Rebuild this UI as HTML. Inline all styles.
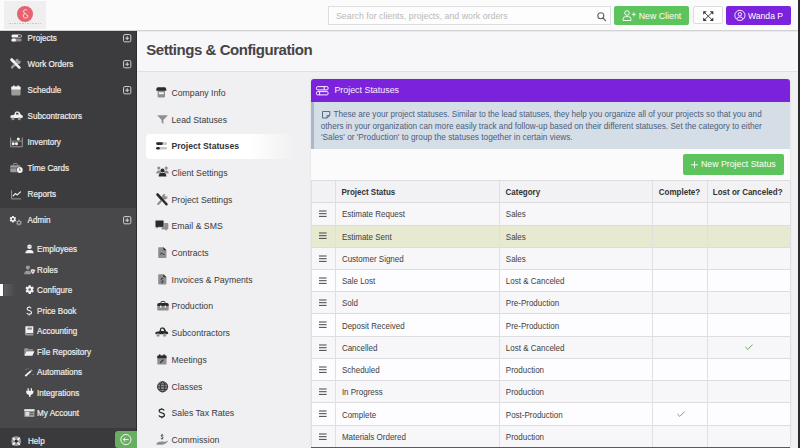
<!DOCTYPE html>
<html><head><meta charset="utf-8"><style>
*{box-sizing:border-box;margin:0;padding:0}
html,body{width:800px;height:448px;overflow:hidden;background:#f0eff1;font-family:"Liberation Sans",sans-serif;position:relative}
.t{position:absolute;white-space:nowrap}
.a{position:absolute}
svg{position:absolute;overflow:visible}
</style></head><body>
<div class="a" style="left:0;top:0;width:800px;height:30px;background:#fbfbfc"></div>
<div class="a" style="left:0;top:30px;width:800px;height:1px;background:#d2d2d4;z-index:3"></div>
<div class="a" style="left:0;top:31px;width:800px;height:1px;background:rgba(0,0,0,.05);z-index:3"></div>
<div class="a" style="left:4px;top:1px;width:42px;height:28px;background:#efefef"></div>
<div class="a" style="left:17.2px;top:5.9px;width:16.2px;height:16px;border-radius:50%;background:#e8616f"></div>
<svg style="left:22px;top:9px" width="7" height="10" viewBox="0 0 7 10"><path d="M5.2 1.6 Q4.6 0.6 3.4 0.7 Q1.4 0.9 1.5 2.7 Q1.6 4.3 3.6 4.4 Q1.2 4.6 1.2 6.8 Q1.3 9.2 3.6 9.1 Q5.8 9 5.8 7.2 Q5.8 5.6 3.8 5.6" fill="none" stroke="#fff" stroke-width="0.75"/></svg>
<div class="a" style="left:9px;top:22.8px;width:32px;height:1.4px;background:repeating-linear-gradient(90deg,#e37a84 0 1.6px,rgba(0,0,0,0) 1.6px 2.6px);opacity:.45"></div>
<div class="a" style="left:327.5px;top:6px;width:283.5px;height:19px;background:#fdfdfd;border:1px solid #dedede"></div>
<div class="t" style="left:336.00px;top:10.95px;font-size:8.8px;line-height:8.8px;color:#b9b9b9;font-weight:normal;transform:scaleY(1.1);transform-origin:0 1.03px;">Search for clients, projects, and work orders</div>

<svg style="left:597px;top:11.6px" width="10" height="10" viewBox="0 0 10 10"><circle cx="3.8" cy="3.8" r="3" fill="none" stroke="#606060" stroke-width="1.1"/><line x1="6" y1="6" x2="8.6" y2="8.6" stroke="#606060" stroke-width="1.3" stroke-linecap="round"/></svg>
<div class="a" style="left:614.3px;top:6.3px;width:74.7px;height:18.4px;background:#5dc35d;border-radius:2px"></div>
<svg style="left:622px;top:10px" width="14" height="11" viewBox="0 0 14 11"><circle cx="5" cy="3" r="2.3" fill="none" stroke="#fff" stroke-width="0.9"/><path d="M1 10.5 V9.3 Q1 6.6 3.6 6.6 H6.4 Q9 6.6 9 9.3 V10.5 Z" fill="none" stroke="#fff" stroke-width="0.9"/><path d="M9.9 4.4 H13.8 M11.85 2.45 V6.35" stroke="#fff" stroke-width="0.95"/></svg>
<div class="t" style="left:638.70px;top:11.05px;font-size:8.8px;line-height:8.8px;color:#fff;font-weight:normal;transform:scaleY(1.1);transform-origin:0 1.03px;">New Client</div>

<div class="a" style="left:692.7px;top:6.3px;width:30px;height:18.2px;background:#fff;border:1px solid #dcdcdc;border-radius:2px"></div>
<svg style="left:702.6px;top:10.5px" width="10.5" height="10.3" viewBox="0 0 10.5 10.3"><g fill="#333"><path d="M0.2 0.2 H3.8 L0.2 3.8 Z"/><path d="M10.3 0.2 H6.7 L10.3 3.8 Z"/><path d="M0.2 10.1 H3.8 L0.2 6.5 Z"/><path d="M10.3 10.1 H6.7 L10.3 6.5 Z"/></g><path d="M1.4 1.4 L9.1 8.9 M9.1 1.4 L1.4 8.9" stroke="#333" stroke-width="0.9"/></svg>
<div class="a" style="left:726.2px;top:6.2px;width:64.8px;height:18.6px;background:#7b22dd;border-radius:2px"></div>
<svg style="left:734px;top:10px" width="12" height="11" viewBox="0 0 12 11"><circle cx="5.9" cy="5.4" r="5.1" fill="none" stroke="#fff" stroke-width="0.9"/><circle cx="5.9" cy="4.2" r="1.7" fill="none" stroke="#fff" stroke-width="0.9"/><path d="M2.8 9 Q3.3 6.9 5.9 6.9 Q8.5 6.9 9 9" fill="none" stroke="#fff" stroke-width="0.9"/></svg>
<div class="t" style="left:748.00px;top:11.12px;font-size:8.6px;line-height:8.6px;color:#fff;font-weight:normal;transform:scaleY(1.1);transform-origin:0 1.01px;">Wanda P</div>

<div class="a" style="left:798.4px;top:0;width:1.6px;height:448px;background:#2a2a2a;z-index:9"></div>
<div class="a" style="left:0;top:30px;width:137px;height:418px;background:#3c3b3d"></div>
<div class="a" style="left:0;top:207.5px;width:137px;height:221px;background:#484749"></div>
<div class="a" style="left:0;top:428px;width:137px;height:20px;background:#3a393b"></div>
<div class="a" style="left:136px;top:30px;width:1px;height:418px;background:#2e2d2f"></div>
<div class="t" style="left:27.60px;top:34.14px;font-size:8.1px;line-height:8.1px;color:#ececec;font-weight:normal;transform:scaleY(1.15);transform-origin:0 0.95px;-webkit-text-stroke:0.2px #ececec">Projects</div>

<svg style="left:122.6px;top:33.90px" width="8.4" height="8.4" viewBox="0 0 8.4 8.4"><rect x="0.55" y="0.55" width="7.3" height="7.3" rx="1.3" fill="none" stroke="#d0d0d0" stroke-width="1"/><path d="M2.3 4.2 H6.1 M4.2 2.3 V6.1" stroke="#d0d0d0" stroke-width="1.1"/></svg>
<div class="t" style="left:27.60px;top:60.24px;font-size:8.1px;line-height:8.1px;color:#ececec;font-weight:normal;transform:scaleY(1.15);transform-origin:0 0.95px;-webkit-text-stroke:0.2px #ececec">Work Orders</div>

<svg style="left:122.6px;top:60.00px" width="8.4" height="8.4" viewBox="0 0 8.4 8.4"><rect x="0.55" y="0.55" width="7.3" height="7.3" rx="1.3" fill="none" stroke="#d0d0d0" stroke-width="1"/><path d="M2.3 4.2 H6.1 M4.2 2.3 V6.1" stroke="#d0d0d0" stroke-width="1.1"/></svg>
<div class="t" style="left:27.60px;top:86.14px;font-size:8.1px;line-height:8.1px;color:#ececec;font-weight:normal;transform:scaleY(1.15);transform-origin:0 0.95px;-webkit-text-stroke:0.2px #ececec">Schedule</div>

<svg style="left:122.6px;top:85.90px" width="8.4" height="8.4" viewBox="0 0 8.4 8.4"><rect x="0.55" y="0.55" width="7.3" height="7.3" rx="1.3" fill="none" stroke="#d0d0d0" stroke-width="1"/><path d="M2.3 4.2 H6.1 M4.2 2.3 V6.1" stroke="#d0d0d0" stroke-width="1.1"/></svg>
<div class="t" style="left:27.60px;top:111.94px;font-size:8.1px;line-height:8.1px;color:#ececec;font-weight:normal;transform:scaleY(1.15);transform-origin:0 0.95px;-webkit-text-stroke:0.2px #ececec">Subcontractors</div>

<div class="t" style="left:27.60px;top:138.34px;font-size:8.1px;line-height:8.1px;color:#ececec;font-weight:normal;transform:scaleY(1.15);transform-origin:0 0.95px;-webkit-text-stroke:0.2px #ececec">Inventory</div>

<div class="t" style="left:27.60px;top:164.04px;font-size:8.1px;line-height:8.1px;color:#ececec;font-weight:normal;transform:scaleY(1.15);transform-origin:0 0.95px;-webkit-text-stroke:0.2px #ececec">Time Cards</div>

<div class="t" style="left:27.60px;top:190.04px;font-size:8.1px;line-height:8.1px;color:#ececec;font-weight:normal;transform:scaleY(1.15);transform-origin:0 0.95px;-webkit-text-stroke:0.2px #ececec">Reports</div>

<div class="t" style="left:27.60px;top:216.34px;font-size:8.1px;line-height:8.1px;color:#ececec;font-weight:normal;transform:scaleY(1.15);transform-origin:0 0.95px;-webkit-text-stroke:0.2px #ececec">Admin</div>

<svg style="left:122.6px;top:216.10px" width="8.4" height="8.4" viewBox="0 0 8.4 8.4"><rect x="0.55" y="0.55" width="7.3" height="7.3" rx="1.3" fill="none" stroke="#d0d0d0" stroke-width="1"/><path d="M2.3 4.2 H6.1 M4.2 2.3 V6.1" stroke="#d0d0d0" stroke-width="1.1"/></svg>
<div class="t" style="left:37.10px;top:245.14px;font-size:8.1px;line-height:8.1px;color:#ececec;font-weight:normal;transform:scaleY(1.15);transform-origin:0 0.95px;-webkit-text-stroke:0.2px #ececec">Employees</div>

<div class="t" style="left:37.10px;top:265.67px;font-size:8.1px;line-height:8.1px;color:#ececec;font-weight:normal;transform:scaleY(1.15);transform-origin:0 0.95px;-webkit-text-stroke:0.2px #ececec">Roles</div>

<div class="t" style="left:37.10px;top:286.20px;font-size:8.1px;line-height:8.1px;color:#ececec;font-weight:normal;transform:scaleY(1.15);transform-origin:0 0.95px;-webkit-text-stroke:0.2px #ececec">Configure</div>

<div class="t" style="left:37.10px;top:306.73px;font-size:8.1px;line-height:8.1px;color:#ececec;font-weight:normal;transform:scaleY(1.15);transform-origin:0 0.95px;-webkit-text-stroke:0.2px #ececec">Price Book</div>

<div class="t" style="left:37.10px;top:327.26px;font-size:8.1px;line-height:8.1px;color:#ececec;font-weight:normal;transform:scaleY(1.15);transform-origin:0 0.95px;-webkit-text-stroke:0.2px #ececec">Accounting</div>

<div class="t" style="left:37.10px;top:347.79px;font-size:8.1px;line-height:8.1px;color:#ececec;font-weight:normal;transform:scaleY(1.15);transform-origin:0 0.95px;-webkit-text-stroke:0.2px #ececec">File Repository</div>

<div class="t" style="left:37.10px;top:368.32px;font-size:8.1px;line-height:8.1px;color:#ececec;font-weight:normal;transform:scaleY(1.15);transform-origin:0 0.95px;-webkit-text-stroke:0.2px #ececec">Automations</div>

<div class="t" style="left:37.10px;top:388.85px;font-size:8.1px;line-height:8.1px;color:#ececec;font-weight:normal;transform:scaleY(1.15);transform-origin:0 0.95px;-webkit-text-stroke:0.2px #ececec">Integrations</div>

<div class="t" style="left:37.10px;top:409.38px;font-size:8.1px;line-height:8.1px;color:#ececec;font-weight:normal;transform:scaleY(1.15);transform-origin:0 0.95px;-webkit-text-stroke:0.2px #ececec">My Account</div>

<div class="a" style="left:0;top:283.5px;width:2.5px;height:12px;background:#fff"></div>
<div class="a" style="left:3.5px;top:283.5px;width:12px;height:12px;background:linear-gradient(90deg,rgba(255,255,255,.12),rgba(255,255,255,0))"></div>
<div class="t" style="left:28.00px;top:437.04px;font-size:8.1px;line-height:8.1px;color:#ececec;font-weight:normal;transform:scaleY(1.15);transform-origin:0 0.95px;-webkit-text-stroke:0.2px #ececec">Help</div>

<div class="a" style="left:114.7px;top:431px;width:22.3px;height:17px;background:#68ad62;border-radius:3px 0 0 3px"></div>
<svg style="left:120px;top:433.8px" width="12" height="11.4" viewBox="0 0 12 11.4"><circle cx="5.9" cy="5.6" r="5.1" fill="none" stroke="#fff" stroke-width="0.9"/><path d="M3.2 5.6 H8.6 M5.4 3.4 L3.2 5.6 L5.4 7.8" fill="none" stroke="#fff" stroke-width="0.9"/></svg>
<div class="a" style="left:137px;top:30px;width:663px;height:40.5px;background:#f7f6f8"></div>
<div class="a" style="left:137px;top:70.6px;width:663px;height:1px;background:#e0dfe1"></div>
<div class="t" style="left:146.30px;top:42.40px;font-size:15px;line-height:15px;color:#454446;font-weight:bold;letter-spacing:-0.45px">Settings &amp; Configuration</div>

<div class="a" style="left:145.5px;top:134px;width:150px;height:24.5px;border-radius:4px;background:linear-gradient(90deg,#fff 0%,#fff 70%,rgba(255,255,255,0) 100%)"></div>
<div class="t" style="left:171.50px;top:88.89px;font-size:8.7px;line-height:8.7px;color:#3a3a3a;font-weight:normal;">Company Info</div>

<div class="t" style="left:171.50px;top:115.59px;font-size:8.7px;line-height:8.7px;color:#3a3a3a;font-weight:normal;">Lead Statuses</div>

<div class="t" style="left:171.40px;top:142.33px;font-size:8.65px;line-height:8.65px;color:#333;font-weight:bold;">Project Statuses</div>

<div class="t" style="left:171.50px;top:168.99px;font-size:8.7px;line-height:8.7px;color:#3a3a3a;font-weight:normal;">Client Settings</div>

<div class="t" style="left:171.50px;top:195.69px;font-size:8.7px;line-height:8.7px;color:#3a3a3a;font-weight:normal;">Project Settings</div>

<div class="t" style="left:171.50px;top:222.39px;font-size:8.7px;line-height:8.7px;color:#3a3a3a;font-weight:normal;">Email &amp; SMS</div>

<div class="t" style="left:171.50px;top:249.09px;font-size:8.7px;line-height:8.7px;color:#3a3a3a;font-weight:normal;">Contracts</div>

<div class="t" style="left:171.50px;top:275.79px;font-size:8.7px;line-height:8.7px;color:#3a3a3a;font-weight:normal;">Invoices &amp; Payments</div>

<div class="t" style="left:171.50px;top:302.49px;font-size:8.7px;line-height:8.7px;color:#3a3a3a;font-weight:normal;">Production</div>

<div class="t" style="left:171.50px;top:329.19px;font-size:8.7px;line-height:8.7px;color:#3a3a3a;font-weight:normal;">Subcontractors</div>

<div class="t" style="left:171.50px;top:355.89px;font-size:8.7px;line-height:8.7px;color:#3a3a3a;font-weight:normal;">Meetings</div>

<div class="t" style="left:171.50px;top:382.59px;font-size:8.7px;line-height:8.7px;color:#3a3a3a;font-weight:normal;">Classes</div>

<div class="t" style="left:171.50px;top:409.29px;font-size:8.7px;line-height:8.7px;color:#3a3a3a;font-weight:normal;">Sales Tax Rates</div>

<div class="t" style="left:171.50px;top:435.99px;font-size:8.7px;line-height:8.7px;color:#3a3a3a;font-weight:normal;">Commission</div>

<div class="a" style="left:311px;top:79.2px;width:479px;height:368px;background:#fbfbfc;border-radius:3px 3px 0 0;box-shadow:0 0 3px rgba(0,0,0,.07)"></div>
<div class="a" style="left:311px;top:79.2px;width:479px;height:22.7px;background:#7b22dd;border-radius:3px 3px 0 0"></div>
<svg style="left:315.6px;top:86px" width="13" height="10" viewBox="0 0 13 10"><g fill="none" stroke="#fff" stroke-width="0.95"><rect x="0.5" y="0.6" width="11.6" height="3.3" rx="1.2"/><rect x="0.5" y="5.6" width="11.6" height="3.3" rx="1.2"/><path d="M8.2 0.6 V3.9 M3.6 5.6 V8.9"/></g></svg>
<div class="t" style="left:334.40px;top:86.27px;font-size:8.9px;line-height:8.9px;color:#f6f0fc;font-weight:normal;transform:scaleY(1.08);transform-origin:0 1.05px;">Project Statuses</div>

<div class="a" style="left:311px;top:101.9px;width:479px;height:46.7px;background:#d5dde7"></div>
<div class="a" style="left:311px;top:101.9px;width:3px;height:46.7px;background:#a9b8c9"></div>
<svg style="left:321.5px;top:110.5px" width="8.5" height="7.5" viewBox="0 0 8.5 7.5"><path d="M0.5 0.5 H7.8 V4.6 L5 7 H0.5 Z M7.8 4.6 H5 V7" fill="none" stroke="#4a607e" stroke-width="0.9"/></svg>
<div class="t" style="left:333.50px;top:109.72px;font-size:8.13px;line-height:8.13px;color:#4a607e;font-weight:normal;transform:scaleY(1.12);transform-origin:0 0.96px;">These are your project statuses. Similar to the lead statuses, they help you organize all of your projects so that you and</div>

<div class="t" style="left:320.80px;top:121.68px;font-size:8.18px;line-height:8.18px;color:#4a607e;font-weight:normal;transform:scaleY(1.12);transform-origin:0 0.96px;">others in your organization can more easily track and follow-up based on their different statuses. Set the category to either</div>

<div class="t" style="left:321.00px;top:133.19px;font-size:8.28px;line-height:8.28px;color:#4a607e;font-weight:normal;transform:scaleY(1.12);transform-origin:0 0.97px;">'Sales' or 'Production' to group the statuses together in certain views.</div>

<div class="a" style="left:682.5px;top:153.9px;width:101.3px;height:21.2px;background:#5dc35d;border-radius:2px"></div>
<svg style="left:691px;top:161px" width="8" height="8" viewBox="0 0 8 8"><path d="M0 3.8 H7 M3.5 0.3 V7.3" stroke="#fff" stroke-width="0.9"/></svg>
<div class="t" style="left:700.90px;top:160.35px;font-size:8.8px;line-height:8.8px;color:#fff;font-weight:normal;">New Project Status</div>

<div class="a" style="left:311px;top:180.8px;width:479px;height:21.69999999999999px;background:#f2f1f3"></div>
<div class="a" style="left:311px;top:202.50px;width:479px;height:22.23px;background:#f7f6f8"></div>
<div class="a" style="left:311px;top:224.73px;width:479px;height:22.23px;background:#e7ead0"></div>
<div class="a" style="left:311px;top:246.96px;width:479px;height:22.23px;background:#f7f6f8"></div>
<div class="a" style="left:311px;top:269.19px;width:479px;height:22.23px;background:#fdfcfe"></div>
<div class="a" style="left:311px;top:291.42px;width:479px;height:22.23px;background:#f7f6f8"></div>
<div class="a" style="left:311px;top:313.65px;width:479px;height:22.23px;background:#fdfcfe"></div>
<div class="a" style="left:311px;top:335.88px;width:479px;height:22.23px;background:#f7f6f8"></div>
<div class="a" style="left:311px;top:358.11px;width:479px;height:22.23px;background:#fdfcfe"></div>
<div class="a" style="left:311px;top:380.34px;width:479px;height:22.23px;background:#f7f6f8"></div>
<div class="a" style="left:311px;top:402.57px;width:479px;height:22.23px;background:#fdfcfe"></div>
<div class="a" style="left:311px;top:424.80px;width:479px;height:22.23px;background:#f7f6f8"></div>
<div class="a" style="left:311px;top:202.30px;width:479px;height:1px;background:#dddcde"></div>
<div class="a" style="left:311px;top:224.53px;width:479px;height:1px;background:#dddcde"></div>
<div class="a" style="left:311px;top:246.76px;width:479px;height:1px;background:#dddcde"></div>
<div class="a" style="left:311px;top:268.99px;width:479px;height:1px;background:#dddcde"></div>
<div class="a" style="left:311px;top:291.22px;width:479px;height:1px;background:#dddcde"></div>
<div class="a" style="left:311px;top:313.45px;width:479px;height:1px;background:#dddcde"></div>
<div class="a" style="left:311px;top:335.68px;width:479px;height:1px;background:#dddcde"></div>
<div class="a" style="left:311px;top:357.91px;width:479px;height:1px;background:#dddcde"></div>
<div class="a" style="left:311px;top:380.14px;width:479px;height:1px;background:#dddcde"></div>
<div class="a" style="left:311px;top:402.37px;width:479px;height:1px;background:#dddcde"></div>
<div class="a" style="left:311px;top:424.60px;width:479px;height:1px;background:#dddcde"></div>
<div class="a" style="left:311px;top:446.83px;width:479px;height:1px;background:#dddcde"></div>
<div class="a" style="left:311px;top:180.30px;width:479px;height:1px;background:#dddcde"></div>
<div class="a" style="left:311.00px;top:180.8px;width:1px;height:267.2px;background:#e0dfe1"></div>
<div class="a" style="left:335.00px;top:180.8px;width:1px;height:267.2px;background:#e0dfe1"></div>
<div class="a" style="left:498.80px;top:180.8px;width:1px;height:267.2px;background:#e0dfe1"></div>
<div class="a" style="left:652.30px;top:180.8px;width:1px;height:267.2px;background:#e0dfe1"></div>
<div class="a" style="left:706.80px;top:180.8px;width:1px;height:267.2px;background:#e0dfe1"></div>
<div class="a" style="left:789.50px;top:180.8px;width:1px;height:267.2px;background:#e0dfe1"></div>
<div class="t" style="left:341.50px;top:187.83px;font-size:8.0px;line-height:8.0px;color:#333;font-weight:bold;transform:scaleY(1.12);transform-origin:0 0.94px;">Project Status</div>

<div class="t" style="left:505.50px;top:187.83px;font-size:8.0px;line-height:8.0px;color:#333;font-weight:bold;transform:scaleY(1.12);transform-origin:0 0.94px;">Category</div>

<div class="t" style="left:658.80px;top:187.83px;font-size:8.0px;line-height:8.0px;color:#333;font-weight:bold;transform:scaleY(1.12);transform-origin:0 0.94px;">Complete?</div>

<div class="t" style="left:712.80px;top:187.83px;font-size:8.0px;line-height:8.0px;color:#333;font-weight:bold;transform:scaleY(1.12);transform-origin:0 0.94px;">Lost or Canceled?</div>

<svg style="left:319.4px;top:210.25px" width="8" height="8" viewBox="0 0 8 8"><path d="M0 1 H7.6 M0 3.7 H7.6 M0 6.4 H7.6" stroke="#3e3e3e" stroke-width="0.95"/></svg>
<div class="t" style="left:341.90px;top:210.48px;font-size:8.0px;line-height:8.0px;color:#3e3e3e;font-weight:normal;transform:scaleY(1.15);transform-origin:0 0.94px;">Estimate Request</div>

<div class="t" style="left:505.80px;top:210.48px;font-size:8.0px;line-height:8.0px;color:#3e3e3e;font-weight:normal;transform:scaleY(1.15);transform-origin:0 0.94px;">Sales</div>

<svg style="left:319.4px;top:232.48px" width="8" height="8" viewBox="0 0 8 8"><path d="M0 1 H7.6 M0 3.7 H7.6 M0 6.4 H7.6" stroke="#3e3e3e" stroke-width="0.95"/></svg>
<div class="t" style="left:341.90px;top:232.71px;font-size:8.0px;line-height:8.0px;color:#3e3e3e;font-weight:normal;transform:scaleY(1.15);transform-origin:0 0.94px;">Estimate Sent</div>

<div class="t" style="left:505.80px;top:232.71px;font-size:8.0px;line-height:8.0px;color:#3e3e3e;font-weight:normal;transform:scaleY(1.15);transform-origin:0 0.94px;">Sales</div>

<svg style="left:319.4px;top:254.71px" width="8" height="8" viewBox="0 0 8 8"><path d="M0 1 H7.6 M0 3.7 H7.6 M0 6.4 H7.6" stroke="#3e3e3e" stroke-width="0.95"/></svg>
<div class="t" style="left:341.90px;top:254.94px;font-size:8.0px;line-height:8.0px;color:#3e3e3e;font-weight:normal;transform:scaleY(1.15);transform-origin:0 0.94px;">Customer Signed</div>

<div class="t" style="left:505.80px;top:254.94px;font-size:8.0px;line-height:8.0px;color:#3e3e3e;font-weight:normal;transform:scaleY(1.15);transform-origin:0 0.94px;">Sales</div>

<svg style="left:319.4px;top:276.94px" width="8" height="8" viewBox="0 0 8 8"><path d="M0 1 H7.6 M0 3.7 H7.6 M0 6.4 H7.6" stroke="#3e3e3e" stroke-width="0.95"/></svg>
<div class="t" style="left:341.90px;top:277.17px;font-size:8.0px;line-height:8.0px;color:#3e3e3e;font-weight:normal;transform:scaleY(1.15);transform-origin:0 0.94px;">Sale Lost</div>

<div class="t" style="left:505.80px;top:277.17px;font-size:8.0px;line-height:8.0px;color:#3e3e3e;font-weight:normal;transform:scaleY(1.15);transform-origin:0 0.94px;">Lost &amp; Canceled</div>

<svg style="left:319.4px;top:299.17px" width="8" height="8" viewBox="0 0 8 8"><path d="M0 1 H7.6 M0 3.7 H7.6 M0 6.4 H7.6" stroke="#3e3e3e" stroke-width="0.95"/></svg>
<div class="t" style="left:341.90px;top:299.40px;font-size:8.0px;line-height:8.0px;color:#3e3e3e;font-weight:normal;transform:scaleY(1.15);transform-origin:0 0.94px;">Sold</div>

<div class="t" style="left:505.80px;top:299.40px;font-size:8.0px;line-height:8.0px;color:#3e3e3e;font-weight:normal;transform:scaleY(1.15);transform-origin:0 0.94px;">Pre-Production</div>

<svg style="left:319.4px;top:321.40px" width="8" height="8" viewBox="0 0 8 8"><path d="M0 1 H7.6 M0 3.7 H7.6 M0 6.4 H7.6" stroke="#3e3e3e" stroke-width="0.95"/></svg>
<div class="t" style="left:341.90px;top:321.63px;font-size:8.0px;line-height:8.0px;color:#3e3e3e;font-weight:normal;transform:scaleY(1.15);transform-origin:0 0.94px;">Deposit Received</div>

<div class="t" style="left:505.80px;top:321.63px;font-size:8.0px;line-height:8.0px;color:#3e3e3e;font-weight:normal;transform:scaleY(1.15);transform-origin:0 0.94px;">Pre-Production</div>

<svg style="left:319.4px;top:343.63px" width="8" height="8" viewBox="0 0 8 8"><path d="M0 1 H7.6 M0 3.7 H7.6 M0 6.4 H7.6" stroke="#3e3e3e" stroke-width="0.95"/></svg>
<div class="t" style="left:341.90px;top:343.86px;font-size:8.0px;line-height:8.0px;color:#3e3e3e;font-weight:normal;transform:scaleY(1.15);transform-origin:0 0.94px;">Cancelled</div>

<div class="t" style="left:505.80px;top:343.86px;font-size:8.0px;line-height:8.0px;color:#3e3e3e;font-weight:normal;transform:scaleY(1.15);transform-origin:0 0.94px;">Lost &amp; Canceled</div>

<svg style="left:744.9px;top:344.13px" width="8" height="6" viewBox="0 0 8 6"><path d="M0.4 3 L2.8 5.4 L7.6 0.6" fill="none" stroke="#6f9a5c" stroke-width="0.95"/></svg>
<svg style="left:319.4px;top:365.86px" width="8" height="8" viewBox="0 0 8 8"><path d="M0 1 H7.6 M0 3.7 H7.6 M0 6.4 H7.6" stroke="#3e3e3e" stroke-width="0.95"/></svg>
<div class="t" style="left:341.90px;top:366.09px;font-size:8.0px;line-height:8.0px;color:#3e3e3e;font-weight:normal;transform:scaleY(1.15);transform-origin:0 0.94px;">Scheduled</div>

<div class="t" style="left:505.80px;top:366.09px;font-size:8.0px;line-height:8.0px;color:#3e3e3e;font-weight:normal;transform:scaleY(1.15);transform-origin:0 0.94px;">Production</div>

<svg style="left:319.4px;top:388.09px" width="8" height="8" viewBox="0 0 8 8"><path d="M0 1 H7.6 M0 3.7 H7.6 M0 6.4 H7.6" stroke="#3e3e3e" stroke-width="0.95"/></svg>
<div class="t" style="left:341.90px;top:388.32px;font-size:8.0px;line-height:8.0px;color:#3e3e3e;font-weight:normal;transform:scaleY(1.15);transform-origin:0 0.94px;">In Progress</div>

<div class="t" style="left:505.80px;top:388.32px;font-size:8.0px;line-height:8.0px;color:#3e3e3e;font-weight:normal;transform:scaleY(1.15);transform-origin:0 0.94px;">Production</div>

<svg style="left:319.4px;top:410.32px" width="8" height="8" viewBox="0 0 8 8"><path d="M0 1 H7.6 M0 3.7 H7.6 M0 6.4 H7.6" stroke="#3e3e3e" stroke-width="0.95"/></svg>
<div class="t" style="left:341.90px;top:410.55px;font-size:8.0px;line-height:8.0px;color:#3e3e3e;font-weight:normal;transform:scaleY(1.15);transform-origin:0 0.94px;">Complete</div>

<div class="t" style="left:505.80px;top:410.55px;font-size:8.0px;line-height:8.0px;color:#3e3e3e;font-weight:normal;transform:scaleY(1.15);transform-origin:0 0.94px;">Post-Production</div>

<svg style="left:676.5px;top:410.82px" width="8" height="6" viewBox="0 0 8 6"><path d="M0.4 3 L2.8 5.4 L7.6 0.6" fill="none" stroke="#6f9a5c" stroke-width="0.95"/></svg>
<svg style="left:319.4px;top:432.55px" width="8" height="8" viewBox="0 0 8 8"><path d="M0 1 H7.6 M0 3.7 H7.6 M0 6.4 H7.6" stroke="#3e3e3e" stroke-width="0.95"/></svg>
<div class="t" style="left:341.90px;top:432.78px;font-size:8.0px;line-height:8.0px;color:#3e3e3e;font-weight:normal;transform:scaleY(1.15);transform-origin:0 0.94px;">Materials Ordered</div>

<div class="t" style="left:505.80px;top:432.78px;font-size:8.0px;line-height:8.0px;color:#3e3e3e;font-weight:normal;transform:scaleY(1.15);transform-origin:0 0.94px;">Production</div>

<div class="a" style="left:311px;top:446.5px;width:479px;height:1.5px;background:#5a5a5a"></div>
<svg style="left:10.5px;top:33.5px" width="11.5" height="8.5" viewBox="0 0 11.5 8.5"><rect x="0.4" y="0.5" width="10.4" height="3" rx="1.5" fill="#f2f2f2"/><rect x="6.9" y="1.1" width="3.3" height="1.8" rx="0.9" fill="#555"/><rect x="0.4" y="4.6" width="10.4" height="3" rx="1.5" fill="#8c8c8c"/><rect x="0.4" y="4.6" width="4.6" height="3" rx="1.5" fill="#f2f2f2"/></svg>
<svg style="left:10.3px;top:58.2px" width="11.2" height="11.4" viewBox="0 0 11.2 11.4"><line x1="2" y1="9.4" x2="6.8" y2="4.6" stroke="#9a9a9a" stroke-width="2.4" stroke-linecap="round"/><circle cx="8" cy="3.4" r="2.7" fill="#9a9a9a"/><circle cx="9.6" cy="1.8" r="1.3" fill="#3c3b3d"/><line x1="1.7" y1="1.7" x2="3.9" y2="3.9" stroke="#f2f2f2" stroke-width="3" stroke-linecap="round"/><line x1="3.9" y1="3.9" x2="6.2" y2="6.3" stroke="#f2f2f2" stroke-width="1.8"/><line x1="6.2" y1="6.3" x2="9.4" y2="9.6" stroke="#f2f2f2" stroke-width="2.6" stroke-linecap="round"/></svg>
<svg style="left:11.4px;top:84.5px" width="10" height="11" viewBox="0 0 10 11"><rect x="0.3" y="1.6" width="9.3" height="8.8" rx="0.8" fill="#9c9c9c"/><path d="M0.3 2.4 Q0.3 1.6 1.1 1.6 H8.8 Q9.6 1.6 9.6 2.4 V4.4 H0.3 Z" fill="#f2f2f2"/><rect x="2.2" y="0.3" width="1.5" height="2" rx="0.7" fill="#f2f2f2"/><rect x="6.3" y="0.3" width="1.5" height="2" rx="0.7" fill="#f2f2f2"/></svg>
<svg style="left:9.8px;top:111px" width="13.5" height="9.5" viewBox="0 0 13.5 9.5"><path d="M0.3 6.6 L0.7 4.6 L4.3 3.8 L5.2 1.2 Q5.6 0.5 6.6 0.5 H8 Q9 0.5 9.6 1.4 L11 3.8 L12.6 4.5 L12.9 6.4 L11.3 6.9 H1.5 Z" fill="#f2f2f2"/><path d="M6.2 1.7 H7.9 L8.9 3.6 H6 Z" fill="#3c3b3d"/><circle cx="3" cy="7.7" r="1.5" fill="#9a9a9a"/><circle cx="9.3" cy="7.7" r="1.5" fill="#9a9a9a"/></svg>
<svg style="left:9.8px;top:136.8px" width="13.2" height="10.6" viewBox="0 0 13.2 10.6"><path d="M0.6 0.5 V9.8 H12.3 V0.5" fill="none" stroke="#9a9a9a" stroke-width="1"/><line x1="0.6" y1="4.1" x2="12.3" y2="4.1" stroke="#9a9a9a" stroke-width="0.9"/><circle cx="8.3" cy="2" r="1.5" fill="#f2f2f2"/><circle cx="3.2" cy="6.8" r="1.5" fill="#f2f2f2"/><circle cx="6.5" cy="6.8" r="1.5" fill="#f2f2f2"/></svg>
<svg style="left:9.8px;top:163.3px" width="13.5" height="10.5" viewBox="0 0 13.5 10.5"><path d="M3.5 2.2 V1.2 Q3.5 0.5 4.2 0.5 H6.6 Q7.3 0.5 7.3 1.2 V2.2" fill="none" stroke="#9a9a9a" stroke-width="0.9"/><rect x="0.3" y="2.2" width="10" height="7" rx="0.6" fill="#9a9a9a"/><line x1="0.3" y1="5" x2="10.3" y2="5" stroke="#3c3b3d" stroke-width="0.6"/><circle cx="9.8" cy="7" r="3.3" fill="#3c3b3d"/><circle cx="9.8" cy="7" r="2.9" fill="#f2f2f2"/><path d="M9.6 5.4 V7.2 H10.9" fill="none" stroke="#3c3b3d" stroke-width="0.6"/></svg>
<svg style="left:11px;top:189.8px" width="10.5" height="9.5" viewBox="0 0 10.5 9.5"><path d="M0.6 0.3 V8.9 H10" fill="none" stroke="#9a9a9a" stroke-width="1"/><path d="M2.2 5.8 L4.3 3.6 L6.3 4.9 L9.4 1.8" fill="none" stroke="#f2f2f2" stroke-width="1.2" stroke-linecap="round" stroke-linejoin="round"/></svg>
<svg style="left:9px;top:215px" width="14" height="11" viewBox="0 0 14 11"><polygon points="3.14,0.89 4.66,0.89 4.90,1.96 5.34,2.22 6.39,1.88 7.15,3.21 6.33,3.94 6.33,4.46 7.15,5.19 6.39,6.52 5.34,6.18 4.90,6.44 4.66,7.51 3.14,7.51 2.90,6.44 2.46,6.18 1.41,6.52 0.65,5.19 1.47,4.46 1.47,3.94 0.65,3.21 1.41,1.88 2.46,2.22 2.90,1.96" fill="#f2f2f2"/><circle cx="3.9" cy="4.2" r="1.1" fill="#484749"/><polygon points="9.33,4.78 10.67,4.78 10.88,5.73 11.27,5.95 12.19,5.65 12.87,6.82 12.15,7.47 12.15,7.93 12.87,8.58 12.19,9.75 11.27,9.45 10.88,9.67 10.67,10.62 9.33,10.62 9.12,9.67 8.73,9.45 7.81,9.75 7.13,8.58 7.85,7.93 7.85,7.47 7.13,6.82 7.81,5.65 8.73,5.95 9.12,5.73" fill="#9a9a9a"/><circle cx="10" cy="7.7" r="1.0" fill="#484749"/></svg>
<svg style="left:24.6px;top:244px" width="9" height="10" viewBox="0 0 9 10"><circle cx="4.5" cy="2.7" r="2.3" fill="#f2f2f2"/><path d="M2.2 2.5 H6.8" stroke="#aaa" stroke-width="0.6"/><path d="M0.3 9.3 Q0.6 6.2 3.2 6 H5.8 Q8.4 6.2 8.7 9.3 Z" fill="#f2f2f2"/></svg>
<svg style="left:23.6px;top:264.5px" width="12" height="10" viewBox="0 0 12 10"><circle cx="3.9" cy="2.6" r="2.1" fill="#9a9a9a"/><path d="M0.2 9.3 Q0.4 6 3 5.8 H5 Q6.5 6 7 7 V9.3 Z" fill="#9a9a9a"/><path d="M6.3 4.5 L8.9 3.9 L11.4 4.5 Q11.5 7.8 8.9 9.5 Q6.2 7.8 6.3 4.5 Z" fill="#f2f2f2" stroke="#484749" stroke-width="0.6"/><circle cx="8.9" cy="6.4" r="0.9" fill="#9a9a9a"/></svg>
<svg style="left:24.5px;top:285.2px" width="9.5" height="9.5" viewBox="0 0 9.5 9.5"><polygon points="3.71,0.31 5.69,0.31 5.99,1.71 6.56,2.04 7.92,1.60 8.91,3.31 7.85,4.27 7.85,4.93 8.91,5.89 7.92,7.60 6.56,7.16 5.99,7.49 5.69,8.89 3.71,8.89 3.41,7.49 2.84,7.16 1.48,7.60 0.49,5.89 1.55,4.93 1.55,4.27 0.49,3.31 1.48,1.60 2.84,2.04 3.41,1.71" fill="#f2f2f2"/><circle cx="4.7" cy="4.6" r="1.3" fill="#666"/></svg>
<svg style="left:26px;top:305.8px" width="6.4" height="9.6" viewBox="0 0 6.4 9.6"><path d="M5.3 2.4 Q4.8 1.2 3.2 1.2 Q1.1 1.2 1.1 2.8 Q1.1 4 3.2 4.5 Q5.5 5 5.5 6.6 Q5.5 8.3 3.2 8.3 Q1.2 8.3 0.8 6.9 M3.2 0.2 V1.2 M3.2 8.3 V9.4" fill="none" stroke="#f2f2f2" stroke-width="1.1"/></svg>
<svg style="left:24.8px;top:326.2px" width="8.8" height="9.5" viewBox="0 0 8.8 9.5"><path d="M0.4 0.6 Q0.4 0.2 0.9 0.2 H8.3 V7.3 H1.5 Q0.9 7.3 0.9 7.9 Q0.9 8.5 1.5 8.5 H8.3 V9.2 H1.3 Q0.4 9.2 0.4 8 Z" fill="#f2f2f2"/><rect x="2.4" y="1.6" width="4.5" height="2" fill="#888"/></svg>
<svg style="left:23.8px;top:347.6px" width="10.8" height="8.3" viewBox="0 0 10.8 8.3"><path d="M0.3 7.6 V1 Q0.3 0.3 1 0.3 H3.4 L4.4 1.3 H8.5 Q9.1 1.3 9.1 1.9 V2.8 H2.4 Z" fill="#9a9a9a"/><path d="M0.3 7.8 L2.4 3.3 H10.5 L8.4 7.8 Z" fill="#f2f2f2"/></svg>
<svg style="left:24.3px;top:367.8px" width="10" height="9" viewBox="0 0 10 9"><path d="M0.6 7.6 L6.2 2.6 L7.4 3.8 L1.9 8.8 Z" fill="#f2f2f2"/><path d="M6.5 2.3 L7.5 1.4 L8.7 2.6 L7.7 3.5 Z" fill="#aaa"/><circle cx="2.2" cy="1.3" r="0.6" fill="#9a9a9a"/><circle cx="9" cy="6.5" r="0.6" fill="#9a9a9a"/><circle cx="4.6" cy="0.5" r="0.45" fill="#9a9a9a"/></svg>
<svg style="left:25.6px;top:388.2px" width="7.6" height="9" viewBox="0 0 7.6 9"><rect x="1.6" y="0.2" width="1.2" height="2.8" fill="#f2f2f2"/><rect x="4.8" y="0.2" width="1.2" height="2.8" fill="#f2f2f2"/><path d="M0.2 2.8 H7.4 V4.2 Q7.4 6.4 4.6 6.9 V8.7 H3 V6.9 Q0.2 6.4 0.2 4.2 Z" fill="#f2f2f2"/></svg>
<svg style="left:23.8px;top:409px" width="10.8" height="8.2" viewBox="0 0 10.8 8.2"><rect x="0.3" y="0.3" width="10.2" height="7.6" rx="0.6" fill="#9a9a9a"/><rect x="0.3" y="0.3" width="10.2" height="1.6" fill="#f2f2f2"/><rect x="1.4" y="3" width="3.6" height="3.8" fill="#ddd"/><rect x="6" y="3.2" width="3.4" height="0.8" fill="#555"/><rect x="6" y="5" width="3.4" height="0.8" fill="#555"/></svg>
<svg style="left:10.8px;top:435.6px" width="11" height="10.4" viewBox="0 0 11 10.4"><circle cx="5.2" cy="5.2" r="4.9" fill="#9a9a9a"/><g stroke="#f2f2f2" stroke-width="1.7" stroke-linecap="round"><line x1="2.1" y1="2.1" x2="3.9" y2="3.9"/><line x1="8.3" y1="2.1" x2="6.5" y2="3.9"/><line x1="2.1" y1="8.3" x2="3.9" y2="6.5"/><line x1="8.3" y1="8.3" x2="6.5" y2="6.5"/></g><circle cx="5.2" cy="5.2" r="1.6" fill="#2a2a2c"/></svg>
<svg style="left:156.3px;top:87.4px" width="10.6" height="10.6" viewBox="0 0 10.6 10.6"><rect x="1.6" y="3.2" width="7.4" height="7.2" rx="0.8" fill="#8f8f91"/><rect x="2.8" y="5.2" width="5" height="2" fill="#f0f0f0"/><path d="M0.2 3.8 Q0.2 0.2 2 0.2 H8.6 Q10.4 0.2 10.4 3.8 Z" fill="#2b2b2d"/></svg>
<svg style="left:156.8px;top:114.8px" width="11.2" height="9.2" viewBox="0 0 11.2 9.2"><path d="M0.2 0.2 H10.9 L6.4 5 V9 L4.6 7.6 V5 Z" fill="#8f8f91"/></svg>
<svg style="left:156px;top:141.9px" width="11.4" height="8" viewBox="0 0 11.4 8"><rect x="0.2" y="0.3" width="10.9" height="2.6" rx="1.3" fill="#c8c8ca"/><rect x="0.2" y="0.3" width="6.6" height="2.6" rx="1.3" fill="#2b2b2d"/><rect x="0.2" y="4.9" width="10.9" height="2.7" rx="1.35" fill="#c8c8ca"/><rect x="0.2" y="4.9" width="3.6" height="2.7" rx="1.35" fill="#2b2b2d"/></svg>
<svg style="left:155.5px;top:166px" width="13" height="10.8" viewBox="0 0 13 10.8"><circle cx="2.8" cy="2.1" r="1.6" fill="#8f8f91"/><circle cx="10.2" cy="2.1" r="1.6" fill="#8f8f91"/><path d="M0.2 7.6 Q0.4 4.4 2.8 4.4 Q4.4 4.4 5 5.6 V7.6 Z" fill="#8f8f91"/><path d="M12.8 7.6 Q12.6 4.4 10.2 4.4 Q8.6 4.4 8 5.6 V7.6 Z" fill="#8f8f91"/><circle cx="6.5" cy="4.6" r="2" fill="#2b2b2d"/><path d="M2.6 10.6 Q2.8 7 5 7 H8 Q10.2 7 10.4 10.6 Z" fill="#2b2b2d"/></svg>
<svg style="left:156.3px;top:193.4px" width="12.2" height="13.4" viewBox="0 0 12.2 13.4"><line x1="2.2" y1="11" x2="7.4" y2="5.4" stroke="#8f8f91" stroke-width="2.1" stroke-linecap="round"/><circle cx="8.8" cy="3.8" r="2.7" fill="#8f8f91"/><circle cx="10.3" cy="2.3" r="1.35" fill="#f0eff1"/><line x1="1.6" y1="1.6" x2="5" y2="5.2" stroke="#2b2b2d" stroke-width="2.8" stroke-linecap="round"/><line x1="5" y1="5.2" x2="10.6" y2="11.4" stroke="#2b2b2d" stroke-width="2.3" stroke-linecap="round"/></svg>
<svg style="left:155.4px;top:220.1px" width="13.6" height="11.2" viewBox="0 0 13.6 11.2"><path d="M6.6 3 H12.3 Q13.3 3 13.3 4 V8.6 Q13.3 9.4 12.3 9.4 H11.8 V11 L10 9.4 H7.6 Q6.6 9.4 6.6 8.4 Z" fill="#8f8f91"/><path d="M1.1 0.2 H7.9 Q8.9 0.2 8.9 1.2 V6.4 Q8.9 7.3 7.9 7.3 H3.2 L1.4 8.7 V7.3 H1.1 Q0.2 7.3 0.2 6.4 V1.2 Q0.2 0.2 1.1 0.2 Z" fill="#2b2b2d" stroke="#f0eff1" stroke-width="0.5"/></svg>
<svg style="left:158px;top:246.9px" width="8.6" height="11.2" viewBox="0 0 8.6 11.2"><path d="M0.8 0.2 H5.6 L8.4 3 V10 Q8.4 10.9 7.6 10.9 H0.9 Q0.2 10.9 0.2 10 V0.9 Q0.2 0.2 0.8 0.2 Z" fill="#8f8f91"/><path d="M5.4 0.2 L8.4 3.2 H6 Q5.4 3.2 5.4 2.6 Z" fill="#2b2b2d"/><path d="M2 7.8 Q3.4 5.2 4.3 6.4 Q5.2 7.6 6.6 7.6" fill="none" stroke="#2b2b2d" stroke-width="0.9"/></svg>
<svg style="left:158px;top:273.6px" width="8.6" height="10.6" viewBox="0 0 8.6 10.6"><path d="M0.8 0.2 H5.6 L8.4 3 V9.6 Q8.4 10.4 7.6 10.4 H0.9 Q0.2 10.4 0.2 9.6 V0.9 Q0.2 0.2 0.8 0.2 Z" fill="#8f8f91"/><path d="M5.4 0.2 L8.4 3.2 H6 Q5.4 3.2 5.4 2.6 Z" fill="#2b2b2d"/><path d="M5.2 5 Q4.8 4.3 4 4.4 Q3 4.5 3.2 5.4 Q3.4 6 4.3 6.3 Q5.4 6.7 5.2 7.7 Q4.9 8.4 3.9 8.3 Q3.2 8.2 3 7.6 M4.2 3.6 V4.4 M4.1 8.3 V9.2" fill="none" stroke="#2b2b2d" stroke-width="0.8"/></svg>
<svg style="left:156.5px;top:300.9px" width="12" height="9.8" viewBox="0 0 12 9.8"><path d="M4 2 V1.2 Q4 0.5 4.7 0.5 H7.3 Q8 0.5 8 1.2 V2" fill="none" stroke="#2b2b2d" stroke-width="0.9"/><path d="M0.3 3.6 Q0.3 2 1.8 2 H10.2 Q11.7 2 11.7 3.6 V5.6 H0.3 Z" fill="#2b2b2d"/><path d="M0.3 5.6 H11.7 V8.6 Q11.7 9.5 10.8 9.5 H1.2 Q0.3 9.5 0.3 8.6 Z" fill="#8f8f91"/><rect x="3" y="4.6" width="1.4" height="2" fill="#eee"/><rect x="7.6" y="4.6" width="1.4" height="2" fill="#eee"/></svg>
<svg style="left:155.4px;top:327px" width="13.8" height="10.2" viewBox="0 0 13.8 10.2"><path d="M0.3 7 L0.7 5 L4.4 4.2 L5.3 1.3 Q5.7 0.5 6.7 0.5 H8.2 Q9.2 0.5 9.8 1.5 L11.2 4.2 L12.9 4.9 L13.3 6.8 L11.6 7.3 H1.5 Z" fill="#2b2b2d"/><path d="M6.3 1.8 H8.1 L9.2 3.9 H6.1 Z" fill="#f0eff1"/><circle cx="3.1" cy="8.3" r="1.6" fill="#8f8f91" stroke="#f0eff1" stroke-width="0.4"/><circle cx="9.6" cy="8.3" r="1.6" fill="#8f8f91" stroke="#f0eff1" stroke-width="0.4"/></svg>
<svg style="left:157.4px;top:353.9px" width="9.8" height="10.8" viewBox="0 0 9.8 10.8"><rect x="0.3" y="1.6" width="9.2" height="9" rx="0.8" fill="#8f8f91"/><path d="M0.3 2.4 Q0.3 1.6 1.1 1.6 H8.7 Q9.5 1.6 9.5 2.4 V4.2 H0.3 Z" fill="#2b2b2d"/><rect x="2" y="0.2" width="1.5" height="2.2" rx="0.6" fill="#2b2b2d"/><rect x="6.3" y="0.2" width="1.5" height="2.2" rx="0.6" fill="#2b2b2d"/><path d="M3.2 8.8 L6.4 5.6" stroke="#2b2b2d" stroke-width="1.1"/></svg>
<svg style="left:156.9px;top:380.6px" width="11.2" height="11.6" viewBox="0 0 11.2 11.6"><circle cx="5.6" cy="5.8" r="5.3" fill="#8f8f91"/><g fill="none" stroke="#2b2b2d" stroke-width="0.8"><circle cx="5.6" cy="5.8" r="5.1"/><ellipse cx="5.6" cy="5.8" rx="2.2" ry="5.1"/><line x1="0.5" y1="5.8" x2="10.7" y2="5.8"/><path d="M1.2 3.2 H10 M1.2 8.4 H10"/></g></svg>
<svg style="left:158.4px;top:408.4px" width="7.4" height="10.4" viewBox="0 0 7.4 10.4"><path d="M6.2 2.6 Q5.6 1.2 3.7 1.2 Q1.2 1.2 1.2 3 Q1.2 4.4 3.7 4.9 Q6.4 5.4 6.4 7.2 Q6.4 9 3.7 9 Q1.4 9 0.9 7.4 M3.7 0.2 V1.2 M3.7 9 V10.2" fill="none" stroke="#2b2b2d" stroke-width="1.3"/></svg>
<svg style="left:155.9px;top:434.1px" width="12.2" height="11.2" viewBox="0 0 12.2 11.2"><path d="M0.3 9.6 Q2.2 7.2 5 7.4 H8.2 Q9 7.5 8.6 8 L11.6 6.8 Q12.2 6.9 11.7 7.6 Q9.8 10.6 5.6 10.8 H0.8 Z" fill="#8f8f91"/><path d="M7.2 1.6 Q6.8 0.9 6 1 Q5 1.1 5.2 2 Q5.4 2.6 6.3 2.8 Q7.3 3.2 7.1 4 Q6.8 4.7 5.9 4.6 Q5.1 4.5 5 3.9 M6.1 0.2 V1 M6.1 4.6 V5.5" fill="none" stroke="#2b2b2d" stroke-width="0.9"/></svg>
<!--ICONS-->
</body></html>
